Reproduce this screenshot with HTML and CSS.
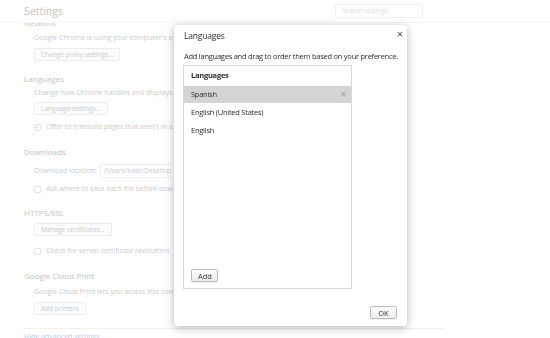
FILE: index.html
```html
<!doctype html>
<html lang="en">
<head>
  <meta charset="utf-8">
  <title>Settings – Languages</title>
  <meta name="viewport" content="width=device-width,initial-scale=1">
  <link rel="stylesheet" href="styles.css">
</head>
<body>
  <header class="top">
    <h1>Settings</h1>
    <input class="search" type="text" placeholder="Search settings">
  </header>

  <main class="page">
    <section class="group">
      <h3>Network</h3>
      <p>Google Chrome is using your computer's system proxy settings to connect to the network.</p>
      <button class="btn">Change proxy settings...</button>
    </section>

    <section class="group">
      <h3>Languages</h3>
      <p>Change how Chrome handles and displays languages.</p>
      <button class="btn">Language settings...</button>
      <label class="check"><span class="box on">✔</span><span class="clip">Offer to translate pages that aren't in a language you read.</span></label>
    </section>

    <section class="group">
      <h3>Downloads</h3>
      <div class="location">Download location: <span class="path">/Users/kate/Desktop</span></div>
      <label class="check"><span class="box"></span><span class="clip">Ask where to save each file before downloading</span></label>
    </section>

    <section class="group">
      <h3>HTTPS/SSL</h3>
      <button class="btn">Manage certificates...</button>
      <label class="check"><span class="box"></span><span class="clip">Check for server certificate revocation</span></label>
    </section>

    <section class="group">
      <h3>Google Cloud Print</h3>
      <p>Google Cloud Print lets you access this computer's printers from anywhere.</p>
      <button class="btn">Add printers</button>
    </section>

    <div class="footer"><a href="#">Hide advanced settings...</a></div>
  </main>

  <div class="dialog">
    <button class="close" aria-label="Close">×</button>
    <h2>Languages</h2>
    <p class="intro">Add languages and drag to order them based on your preference.</p>
    <div class="lang-box">
      <div class="lang-head">Languages</div>
      <ul class="lang-list">
        <li class="selected">Spanish <span class="remove">×</span></li>
        <li>English (United States)</li>
        <li>English</li>
      </ul>
      <button class="dbtn add">Add</button>
    </div>
    <div class="actions">
      <button class="dbtn">OK</button>
    </div>
  </div>
</body>
</html>
```

FILE: styles.css
```css
:root {
  --faded:      #cbcbcb;
  --faded-head: #c2c2c2;
  --faded-line: #f0f0f0;
  --text:       #2e2e2e;
}
*, *::before, *::after { box-sizing: border-box; }
body {
  margin: 0;
  background: #fff;
  font-family: "Open Sans", sans-serif;
  font-size: 7px;
  color: var(--faded);
  overflow: hidden;
  height: 338px;
}
h1, h2, h3, p { margin: 0; font-weight: normal; }

/* ── faded settings page ──────────────────────────────── */
.top {
  position: fixed;
  top: 0; left: 0; right: 0;
  height: 23px;
  background: #fff;
  display: flex;
  align-items: center;
  padding: 0 0 1px 24px;
  border-bottom: 1px solid #f6f6f6;
  z-index: 2;
}
.top h1 {
  font-size: 10.5px;
  color: var(--faded-head);
  width: 311px;
}
.search {
  width: 88px;
  height: 14px;
  border: 1px solid #f0f0f0;
  border-radius: 2px;
  font: inherit;
  font-size: 6.5px;
  padding: 0 6px;
}
.search::placeholder { color: #e0e0e0; }

.page {
  padding: 16px 0 0 24px;
  width: 400px;
}
.group h3 {
  font-size: 8px;
  line-height: 14px;
  color: var(--faded-head);
  margin-bottom: 1px;
}
.group:first-child h3 { margin-bottom: 2px; }
.group p,
.location,
.check {
  margin-left: 10px;
  line-height: 12px;
  white-space: nowrap;
  max-width: 139px;
  overflow: hidden;
}
.btn {
  display: block;
  margin: 4px 0 0 10px;
  height: 13px;
  padding: 0 6px;
  font: inherit;
  font-size: 6.5px;
  color: var(--faded);
  background: #fcfcfc;
  border: 1px solid #ececec;
  border-radius: 2px;
}
.check {
  display: flex;
  align-items: center;
  gap: 5px;
  margin-top: 6px;
}
.clip { overflow: hidden; }
.box {
  flex: none;
  width: 7px; height: 7px;
  border: 1px solid #e6e6e6;
  border-radius: 1px;
  font-size: 6px;
  line-height: 5px;
  color: #d4d4d4;
  text-align: center;
}
.location {
  display: flex;
  align-items: center;
  margin-top: 5px;
  height: 14px;
}
.path {
  margin-left: 3px;
  border: 1px solid #eeeeee;
  padding: 1px 3px;
  line-height: 10px;
}
.location + .check { margin-top: 5px; }
.group:nth-child(2) { margin-top: 11px; }
.group:nth-child(2) .btn { margin-top: 3px; }
.group:nth-child(3) { margin-top: 12px; }
.group:nth-child(4) { margin-top: 11px; }
.group:nth-child(5) { margin-top: 12px; }
.group:nth-child(4) .btn { margin-top: 3px; }
.group:nth-child(4) .check { margin-top: 9px; }
.group:nth-child(5) p { margin-top: 3px; }
.group:nth-child(5) .btn { margin-top: 4px; }
.footer {
  margin-top: 13px;
  border-top: 1px solid var(--faded-line);
  padding-top: 3px;
  width: 420px;
}
.footer a { color: #bccbee; text-decoration: none; font-size: 7px; }

/* ── languages dialog ─────────────────────────────────── */
.dialog {
  position: absolute;
  left: 174px; top: 25px;
  width: 233px; height: 301px;
  background: #fff;
  border-radius: 3px;
  box-shadow: 0 2px 10px rgba(0,0,0,.28), 0 0 1px rgba(0,0,0,.2);
  padding: 0 10px 0 9px;
  color: var(--text);
  font-size: 7.5px;
  letter-spacing: -0.25px;
  display: flex;
  flex-direction: column;
  z-index: 5;
}
.dialog h2 {
  font-size: 8.5px;
  letter-spacing: -0.2px;
  line-height: 14px;
  margin: 4px 0 0 1px;
}
.close {
  position: absolute;
  top: 1px; right: 4px;
  border: none;
  background: none;
  font: inherit;
  font-size: 11px;
  color: #444;
  padding: 0;
}
.intro {
  margin: 7px 0 0 1px;
  line-height: 12px;
  white-space: nowrap;
}
.lang-box {
  margin-top: 3px;
  width: 169px;
  height: 224px;
  border: 1px solid #d8d8d8;
  display: flex;
  flex-direction: column;
}
.lang-head {
  font-weight: bold;
  height: 20px;
  line-height: 19px;
  padding-left: 7px;
}
.lang-list {
  list-style: none;
  margin: 0;
  padding: 0;
  flex: 1;
}
.lang-list li {
  height: 18px;
  line-height: 18px;
  padding: 0 5px 0 7px;
  display: flex;
  justify-content: space-between;
}
.lang-list li.selected { background: #d4d4d4; height: 17px; line-height: 17px; }
.remove { color: #999; font-size: 10px; }
.dbtn {
  height: 13px;
  padding: 0 6px;
  font: inherit;
  color: #333;
  background: linear-gradient(#fefefe, #ededed);
  border: 1px solid #bdbdbd;
  border-radius: 2px;
  box-shadow: 0 1px 0 rgba(0,0,0,.06);
}
.add {
  align-self: flex-start;
  width: 27px;
  margin: 0 0 6px 7px;
}
.actions {
  display: flex;
  justify-content: flex-end;
  margin-top: 17px;
}
.actions .dbtn { width: 27px; }
```
